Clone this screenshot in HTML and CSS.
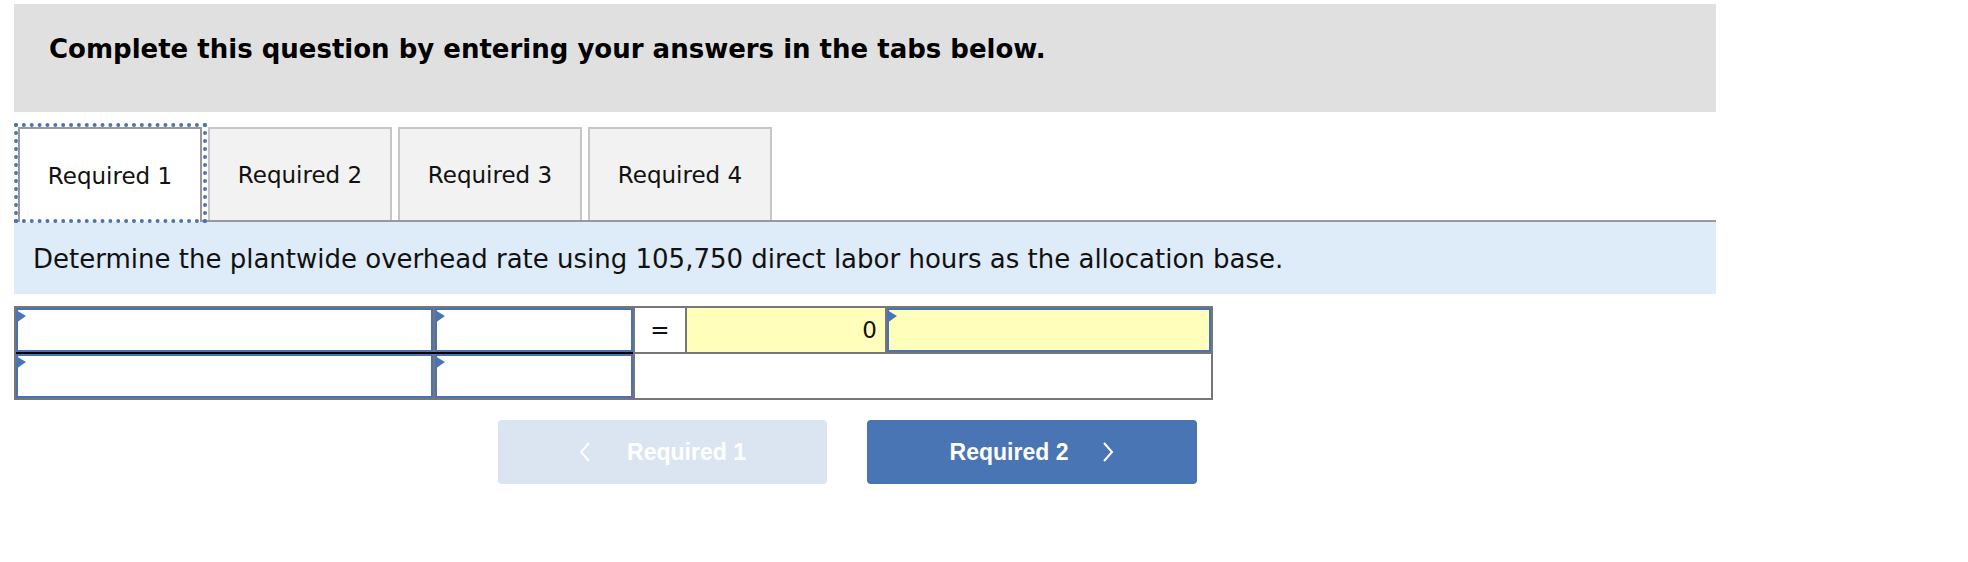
FILE: index.html
```html
<!DOCTYPE html>
<html lang="en">
<head>
  <meta charset="UTF-8">
  <meta name="viewport" content="width=device-width, initial-scale=1.0">
  <title>Required 1</title>
  <link rel="stylesheet" href="styles.css">
</head>
<body>

    <div class="container">

        <!-- Instruction header -->
        <div class="instructions">Complete this question by entering your answers in the tabs below.</div>

        <!-- Tabs -->
        <div class="tabs">
            <button class="tab active">Required 1</button>
            <button class="tab">Required 2</button>
            <button class="tab">Required 3</button>
            <button class="tab">Required 4</button>
        </div>

        <!-- Question text -->
        <div class="prompt">Determine the plantwide overhead rate using 105,750 direct labor hours as the allocation base.</div>

        <!-- Answer grid -->
        <div class="answer-grid">
            <div class="field"><input type="text"></div>
            <div class="field"><input type="text"></div>
            <div class="cell equals">=</div>
            <div class="cell result">0</div>
            <div class="field"><input type="text" class="yellow"></div>

            <div class="divider"></div>

            <div class="field row2"><input type="text"></div>
            <div class="field row2"><input type="text"></div>
            <div class="cell row2 empty"></div>
        </div>

        <!-- Prev / Next -->
        <div class="nav">
            <button class="nav-btn prev" disabled>
                <svg width="12" height="20" viewBox="0 0 12 20"><polyline points="10,1 2,10 10,19" fill="none" stroke="#fff" stroke-width="2"/></svg>
                <span>Required 1</span>
            </button>
            <button class="nav-btn next">
                <span>Required 2</span>
                <svg width="12" height="20" viewBox="0 0 12 20"><polyline points="2,1 10,10 2,19" fill="none" stroke="#fff" stroke-width="2"/></svg>
            </button>
        </div>

    </div>

</body>
</html>
```

FILE: styles.css
```css
body {
  margin: 0;
  font-family: "DejaVu Sans", Verdana, sans-serif;
  background-color: #fff;
  color: #111;
}

.container {
  padding: 4px 14px;
  width: 1702px;
}

/* Header abu-abu */
.instructions {
  background-color: #e0e0e0;
  font-size: 26px;
  font-weight: bold;
  line-height: 30px;
  padding: 30px 35px 48px;
  color: #000;
}

/* Tabs */
.tabs {
  display: flex;
  gap: 6px;
  margin-top: 15px;
  padding-left: 4px;
  border-bottom: 2px solid #999;
}

.tab {
  position: relative;
  width: 184px;
  height: 93px;
  box-sizing: border-box;
  border: 2px solid #c6c6c6;
  border-bottom: none;
  background-color: #f2f2f2;
  font-family: "DejaVu Sans", Verdana, sans-serif;
  font-size: 23px;
  color: #111;
  padding: 0;
  cursor: pointer;
}

.tab.active {
  background-color: #fff;
  border-color: #999;
  height: 95px;
  margin-bottom: -2px;
}

/* focus ring */
.tab.active::after {
  content: "";
  position: absolute;
  top: -6px;
  left: -6px;
  right: -7px;
  bottom: -1px;
  border: 4px dotted #4a74b6;
}

/* Teks soal */
.prompt {
  background-color: #deebf8;
  font-size: 26px;
  line-height: 30px;
  padding: 22px 19px 20px;
}

/* Grid jawaban */
.answer-grid {
  display: grid;
  width: max-content;
  grid-template-columns: 417px 198px 50px 198px 324px;
  grid-template-rows: 44px 2px 44px;
  column-gap: 2px;
  padding: 2px;
  margin-top: 12px;
  background-color: #777;
}

.field {
  position: relative;
}

.field::before {
  content: "";
  position: absolute;
  left: 0;
  top: 2px;
  border-left: 10px solid #4a75b5;
  border-top: 6px solid transparent;
  border-bottom: 7px solid transparent;
}

.field input {
  width: 100%;
  height: 100%;
  box-sizing: border-box;
  border: 2px solid #4a72b3;
  background-color: #fff;
  font-family: "DejaVu Sans", Verdana, sans-serif;
  font-size: 23px;
  padding: 0 8px;
  margin: 0;
  outline: none;
}

.field input.yellow {
  background-color: #ffffbb;
}

.cell {
  background-color: #fff;
  font-size: 23px;
  line-height: 44px;
}

.cell.equals {
  text-align: center;
}

.cell.result {
  background-color: #ffffbb;
  text-align: right;
  padding-right: 8px;
}

.divider {
  grid-row: 2;
  grid-column: 1 / 3;
  background-color: #000;
}

.row2 {
  grid-row: 3;
}

.cell.empty {
  grid-column: 3 / 6;
}

/* Tombol navigasi */
.nav {
  display: flex;
  gap: 40px;
  margin-top: 20px;
  padding-left: 484px;
}

.nav-btn {
  width: 329px;
  height: 64px;
  border: none;
  border-radius: 4px;
  display: flex;
  align-items: center;
  justify-content: center;
  font-family: "Liberation Sans", Arial, sans-serif;
  font-size: 23px;
  font-weight: bold;
  color: #fff;
  cursor: pointer;
}

.nav-btn.prev {
  background-color: #dbe5f1;
  gap: 36px;
  cursor: default;
}

.nav-btn.next {
  background-color: #4a75b4;
  gap: 34px;
  width: 330px;
}
```
